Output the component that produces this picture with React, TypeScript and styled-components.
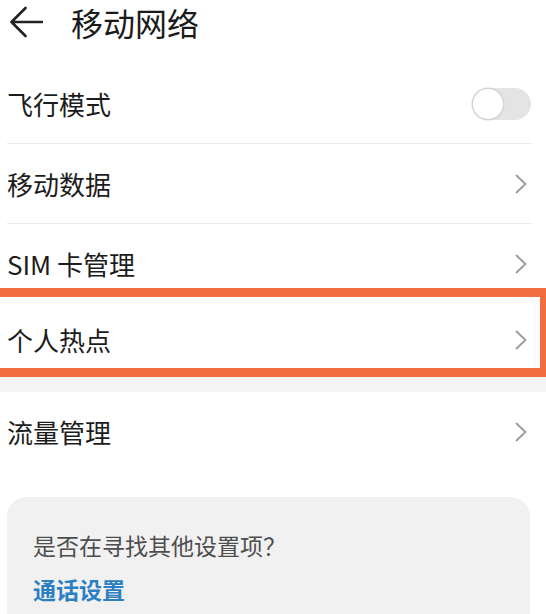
import React from "react";
import styled, { createGlobalStyle } from "styled-components";

const Global = createGlobalStyle`
  html, body { margin: 0; padding: 0; background: #ffffff; }
  body { font-family: "Noto Sans CJK SC", "Noto Sans", sans-serif; color: #1a1a1a; }
`;

const Page = styled.div`
  width: 546px;
  height: 614px;
  overflow: hidden;
  background: #ffffff;
  position: relative;
`;

const Header = styled.header`
  display: flex;
  align-items: center;
  height: 44px;
  padding-left: 9px;
  gap: 28px;
`;

const Title = styled.h1`
  margin: 0;
  font-size: 32px;
  font-weight: 400;
  line-height: 44px;
  color: #1a1a1a;
`;

const List = styled.div`
  margin-top: 20px;
  display: flex;
  flex-direction: column;
`;

const Row = styled.div<{ $divider?: boolean; $height?: number }>`
  position: relative;
  height: ${(p) => p.$height ?? 80}px;
  margin: 0 15px 0 7px;
  display: flex;
  align-items: center;
  justify-content: space-between;
  box-sizing: border-box;
  border-bottom: ${(p) => (p.$divider ? "1px solid #e9e9e9" : "none")};
`;

const Label = styled.span`
  font-size: 26px;
  line-height: 34px;
  color: #1c1c1c;
`;

const Chevron = styled.svg`
  width: 12px;
  height: 20px;
  margin-right: 4px;
`;

const Toggle = styled.div`
  width: 59px;
  height: 32px;
  border-radius: 16px;
  background: #e4e4e4;
  display: flex;
  align-items: center;
  padding-left: 1px;
  box-sizing: border-box;
`;

const Knob = styled.div`
  width: 30px;
  height: 30px;
  border-radius: 50%;
  background: #ffffff;
  box-shadow: 0 0 0 1.5px #d4d4d4;
`;

const Highlight = styled.div`
  position: absolute;
  left: -20px;
  right: -15px;
  top: -16px;
  bottom: -1px;
  border: 9px solid #f26d3f;
  border-right-width: 6px;
  pointer-events: none;
`;

const Band = styled.div`
  height: 16px;
  background: #f5f5f5;
`;

const Card = styled.section`
  margin: 25px 16px 0 7px;
  border-radius: 20px;
  background: #f1f1f1;
  padding: 32px 26px 40px;
  display: flex;
  flex-direction: column;
  gap: 12px;
`;

const Hint = styled.p`
  margin: 0;
  font-size: 23px;
  line-height: 32px;
  color: #4e4e4e;
`;

const Link = styled.a`
  font-size: 23px;
  line-height: 32px;
  font-weight: 700;
  color: #2c7fc2;
  text-decoration: none;
`;

const ChevronIcon = () => (
  <Chevron viewBox="0 0 12 20">
    <polyline points="1.5,1.5 10.5,10 1.5,18.5" fill="none" stroke="#9b9b9b" strokeWidth="1.8" strokeLinecap="round" strokeLinejoin="round" />
  </Chevron>
);

const BackArrow = () => (
  <svg width="34" height="32" viewBox="0 0 34 32">
    <path d="M33 16 H2.5 M16.5 2 L2.5 16 L16.5 30" fill="none" stroke="#222222" strokeWidth="2.6" strokeLinecap="round" strokeLinejoin="round" />
  </svg>
);

export default function App() {
  return (
    <Page>
      <Global />
      <Header>
        <BackArrow />
        <Title>移动网络</Title>
      </Header>
      <List>
        <Row $divider>
          <Label>飞行模式</Label>
          <Toggle>
            <Knob />
          </Toggle>
        </Row>
        <Row $divider>
          <Label>移动数据</Label>
          <ChevronIcon />
        </Row>
        <Row>
          <Label>SIM 卡管理</Label>
          <ChevronIcon />
        </Row>
        <Row $height={72}>
          <Label>个人热点</Label>
          <ChevronIcon />
          <Highlight />
        </Row>
        <Band />
        <Row>
          <Label>流量管理</Label>
          <ChevronIcon />
        </Row>
      </List>
      <Card>
        <Hint>是否在寻找其他设置项？</Hint>
        <Link href="#">通话设置</Link>
      </Card>
    </Page>
  );
}
